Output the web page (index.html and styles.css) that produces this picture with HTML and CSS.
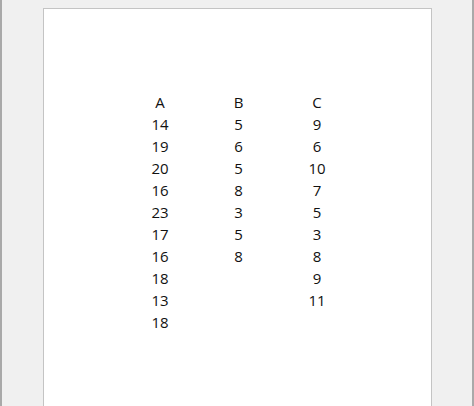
FILE: index.html
```html
<!DOCTYPE html>
<html>
<head>
<meta charset="utf-8">
<link rel="stylesheet" href="styles.css">
</head>
<body>
<div class="frame">
  <div class="page">
    <div class="data">
      <div class="col">
        <div class="cell">A</div>
        <div class="cell">14</div>
        <div class="cell">19</div>
        <div class="cell">20</div>
        <div class="cell">16</div>
        <div class="cell">23</div>
        <div class="cell">17</div>
        <div class="cell">16</div>
        <div class="cell">18</div>
        <div class="cell">13</div>
        <div class="cell">18</div>
      </div>
      <div class="col">
        <div class="cell">B</div>
        <div class="cell">5</div>
        <div class="cell">6</div>
        <div class="cell">5</div>
        <div class="cell">8</div>
        <div class="cell">3</div>
        <div class="cell">5</div>
        <div class="cell">8</div>
      </div>
      <div class="col">
        <div class="cell">C</div>
        <div class="cell">9</div>
        <div class="cell">6</div>
        <div class="cell">10</div>
        <div class="cell">7</div>
        <div class="cell">5</div>
        <div class="cell">3</div>
        <div class="cell">8</div>
        <div class="cell">9</div>
        <div class="cell">11</div>
      </div>
    </div>
  </div>
</div>
</body>
</html>
```

FILE: styles.css
```css
html, body {
  margin: 0;
  padding: 0;
  height: 100%;
  overflow: hidden;
}
body {
  background: #f0f0f0;
  font-family: "Open Sans", "Liberation Sans", sans-serif;
}
.frame {
  height: 406px;
  box-sizing: border-box;
  border-left: 2px solid #a9a9a9;
  border-right: 2px solid #a9a9a9;
  padding: 8px 0 0 41px;
  overflow: hidden;
}
.page {
  width: 389px;
  height: 420px;
  box-sizing: border-box;
  background: #ffffff;
  border: 1px solid #c4c4c4;
  padding: 82px 0 0 76.75px;
}
.data {
  display: grid;
  grid-template-columns: 78.5px 78.5px 78.5px;
  align-items: start;
}
.col {
  display: flex;
  flex-direction: column;
}
.cell {
  height: 22px;
  line-height: 22px;
  text-align: center;
  font-size: 15px;
  color: #111111;
}
```
